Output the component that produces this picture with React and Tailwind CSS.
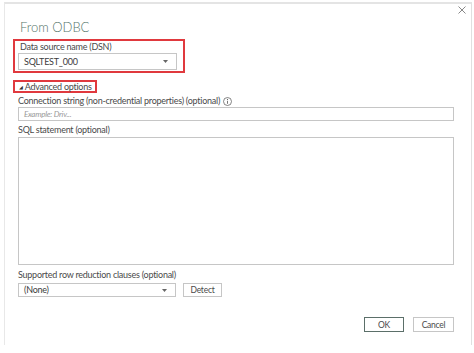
// Power Query "From ODBC" dialog
function Caret() {
  return (
    <svg width="5" height="3" viewBox="0 0 5 3" className="shrink-0">
      <path d="M0 0 L5 0 L2.5 3 Z" fill="#666" />
    </svg>
  );
}

function Select({ value, width }) {
  return (
    <div
      className="h-full flex items-center justify-between border border-[#c6c6c6] bg-white pl-[5px] pr-[8px] text-[#3c3c3c] whitespace-nowrap"
      style={{ width }}
    >
      <span>{value}</span>
      <Caret />
    </div>
  );
}

export default function App() {
  return (
    <div className="w-[474px] h-[353px] bg-white overflow-hidden relative font-['Lato',sans-serif] text-[9px] leading-[12px] tracking-[-0.25px] text-[#4a4a4a]">
      <div className="ml-[4px] mt-[2px] w-[468px] h-[343px] border-t-2 border-t-[#e4e4e4] border-l border-l-[#e8e8e8] border-r border-r-[#e0e0e0] relative">
        {/* close */}
        <svg className="absolute right-[5px] top-[2px]" width="8" height="8" viewBox="0 0 8 8">
          <path d="M0.5 0.5 L7.5 7.5 M7.5 0.5 L0.5 7.5" stroke="#888" strokeWidth="1" />
        </svg>

        <div className="pl-[8px] pt-[15px]">
          <h1 className="pl-[7px] text-[13px] leading-[17px] tracking-normal font-light text-[#55766b]">From ODBC</h1>

          {/* DSN */}
          <div className="mt-[3px] w-[172px] border-2 border-[#e0393e] pb-[1px] px-[3px]">
            <div className="pl-[2px] leading-[12px]">Data source name (DSN)</div>
            <div className="h-[17px] flex">
              <Select value="SQLTEST_000" width={159} />
            </div>
          </div>

          {/* Advanced options */}
          <div className="mt-[7px] w-[84px] h-[13px] border-2 border-[#e0393e] flex items-center pl-[4px] leading-[10px] whitespace-nowrap">
            <span className="text-[5px] mr-[2px] text-[#333]">◢</span>
            <span>Advanced options</span>
          </div>

          <div className="pl-[5px] w-[441px]">
            <div className="mt-[2px] flex items-center gap-[3px] whitespace-nowrap">
              <span>Connection string (non-credential properties) (optional)</span>
              <svg width="9" height="9" viewBox="0 0 9 9">
                <circle cx="4.5" cy="4.5" r="4" fill="none" stroke="#666" strokeWidth="0.8" />
                <path d="M4.5 3.8 V6.8" stroke="#666" strokeWidth="0.9" />
                <circle cx="4.5" cy="2.4" r="0.55" fill="#666" />
              </svg>
            </div>
            <div className="w-[436px] h-[14px] border border-[#c6c6c6] pl-[5px] flex items-center italic text-[8px] text-[#9a9a9a]">
              Example: Driv...
            </div>

            <div className="mt-[3px]">SQL statement (optional)</div>
            <div className="mt-[1px] w-[436px] h-[128px] border border-[#c6c6c6]" />

            <div className="mt-[4px]">Supported row reduction clauses (optional)</div>
            <div className="mt-[2px] flex items-center gap-[7px] h-[14px]">
              <div className="h-[14px] flex">
                <Select value="(None)" width={158} />
              </div>
              <button className="w-[39px] h-[14px] border border-[#c6c6c6] bg-white text-[8.5px] leading-[12px] text-[#4a4a4a]">
                Detect
              </button>
            </div>

            <div className="mt-[20px] w-[436px] flex justify-end gap-[9px]">
              <button className="w-[40px] h-[15px] border border-[#5b6f69] bg-white text-[8.5px] leading-[12px] text-[#4a4a4a]">
                OK
              </button>
              <button className="w-[41px] h-[15px] border border-[#c6c6c6] bg-white text-[8.5px] leading-[12px] text-[#4a4a4a]">
                Cancel
              </button>
            </div>
          </div>
        </div>
      </div>
    </div>
  );
}
